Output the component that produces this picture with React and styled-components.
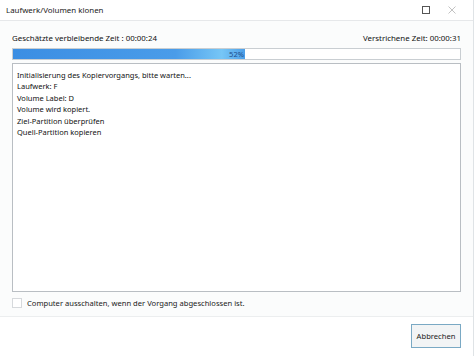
import React from "react";
import styled, { createGlobalStyle } from "styled-components";

const Global = createGlobalStyle`
  html, body { margin: 0; padding: 0; background: #ffffff; }
  body { font-family: "Noto Sans", "Open Sans", sans-serif; color: #111; }
  * { box-sizing: border-box; }
`;

const Window = styled.div`
  width: 474px;
  height: 356px;
  display: flex;
  flex-direction: column;
  background: #fdfdfd;
  border-right: 1px solid #dfe3e6;
`;

const TitleBar = styled.div`
  height: 21px;
  display: flex;
  align-items: center;
  padding: 0 8px 0 6px;
  background: #ffffff;
  border-bottom: 1px solid #e6e8ea;
  font-size: 7.9px;
  color: #1a1a1a;
`;

const Title = styled.div`
  flex: 1;
`;

const Ctrl = styled.div`
  width: 26px;
  height: 20px;
  display: flex;
  align-items: center;
  justify-content: center;
`;

const Content = styled.div`
  flex: 1;
  display: flex;
  flex-direction: column;
  padding: 9px 12px 0 12px;
  background: #fbfcfc;
`;

const TimeRow = styled.div`
  display: flex;
  justify-content: space-between;
  font-size: 7.9px;
  height: 16px;
  align-items: center;
  color: #111;
`;

const Progress = styled.div`
  margin-top: 2px;
  height: 12px;
  border: 1px solid #c9ced2;
  background: #ffffff;
  position: relative;
`;

const Fill = styled.div`
  height: 100%;
  background: linear-gradient(90deg, #3b8ee3 0%, #4a9ce9 70%, #76c6f6 90%, #4d9fe8 100%);
`;

const Percent = styled.div`
  position: absolute;
  inset: 0;
  display: flex;
  align-items: center;
  justify-content: center;
  font-size: 7.5px;
  color: #1f4f8c;
`;

const LogBox = styled.div`
  margin-top: 3px;
  height: 229px;
  border: 1px solid #b9bec3;
  background: #ffffff;
  padding: 6px 4px;
  font-size: 7.5px;
  line-height: 11.4px;
  color: #111;
`;

const CheckRow = styled.label`
  display: flex;
  align-items: center;
  gap: 5px;
  height: 22px;
  font-size: 7.6px;
  color: #1a1a1a;
`;

const Box = styled.span`
  width: 10px;
  height: 10px;
  border: 1px solid #d6d9dc;
  background: #ffffff;
`;

const Footer = styled.div`
  height: 40px;
  background: #ffffff;
  border-top: 1px solid #eceeef;
  display: flex;
  justify-content: flex-end;
  align-items: center;
  padding: 0 12px 1px 0;
`;

const Button = styled.button`
  width: 50px;
  height: 24px;
  border: 1.5px solid #7aa9c4;
  background: #f2f4f5;
  font-family: "Noto Sans", "Open Sans", sans-serif;
  font-size: 7.6px;
  color: #1a1a1a;
  padding: 0;
`;

export default function App() {
  return (
    <>
      <Global />
      <Window>
        <TitleBar>
          <Title>Laufwerk/Volumen klonen</Title>
          <Ctrl>
            <svg width="8" height="8" viewBox="0 0 8 8">
              <rect x="0.5" y="0.5" width="7" height="7" fill="none" stroke="#555" strokeWidth="1" />
            </svg>
          </Ctrl>
          <Ctrl>
            <svg width="8" height="8" viewBox="0 0 8 8">
              <path d="M0.5 0.5 L7.5 7.5 M7.5 0.5 L0.5 7.5" stroke="#bbb" strokeWidth="0.9" />
            </svg>
          </Ctrl>
        </TitleBar>
        <Content>
          <TimeRow>
            <span>Geschätzte verbleibende Zeit : 00:00:24</span>
            <span>Verstrichene Zeit: 00:00:31</span>
          </TimeRow>
          <Progress>
            <Fill style={{ width: "52%" }} />
            <Percent>52%</Percent>
          </Progress>
          <LogBox>
            <div>Initialisierung des Kopiervorgangs, bitte warten...</div>
            <div>Laufwerk: F</div>
            <div>Volume Label: D</div>
            <div>Volume wird kopiert.</div>
            <div>Ziel-Partition überprüfen</div>
            <div>Quell-Partition kopieren</div>
          </LogBox>
          <CheckRow>
            <Box />
            Computer ausschalten, wenn der Vorgang abgeschlossen ist.
          </CheckRow>
        </Content>
        <Footer>
          <Button>Abbrechen</Button>
        </Footer>
      </Window>
    </>
  );
}
